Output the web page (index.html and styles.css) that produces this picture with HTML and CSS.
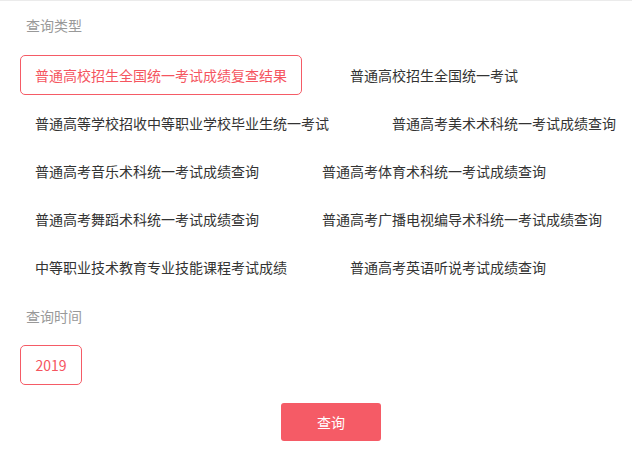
FILE: index.html
```html
<!DOCTYPE html>
<html lang="zh-CN">
<head>
<meta charset="utf-8">
<link rel="stylesheet" href="styles.css">
</head>
<body>
<div class="page">
  <div class="label">查询类型</div>
  <div class="options">
    <div class="row">
      <span class="opt active">普通高校招生全国统一考试成绩复查结果</span>
      <span class="opt">普通高校招生全国统一考试</span>
    </div>
    <div class="row">
      <span class="opt">普通高等学校招收中等职业学校毕业生统一考试</span>
      <span class="opt">普通高考美术术科统一考试成绩查询</span>
    </div>
    <div class="row">
      <span class="opt">普通高考音乐术科统一考试成绩查询</span>
      <span class="opt">普通高考体育术科统一考试成绩查询</span>
    </div>
    <div class="row">
      <span class="opt">普通高考舞蹈术科统一考试成绩查询</span>
      <span class="opt">普通高考广播电视编导术科统一考试成绩查询</span>
    </div>
    <div class="row">
      <span class="opt">中等职业技术教育专业技能课程考试成绩</span>
      <span class="opt">普通高考英语听说考试成绩查询</span>
    </div>
  </div>
  <div class="label label-time">查询时间</div>
  <div class="options">
    <div class="row">
      <span class="opt active year">2019</span>
    </div>
  </div>
  <div class="actions">
    <button class="submit">查询</button>
  </div>
</div>
</body>
</html>
```

FILE: styles.css
```css
html, body {
  margin: 0;
  padding: 0;
  background: #fff;
}
body {
  font-family: "Noto Sans CJK SC", "Noto Sans", sans-serif;
  font-size: 14px;
  color: #333;
}
.page {
  border-top: 1px solid #ebebeb;
  padding: 14px 0 0 20px;
}
.label {
  color: #999;
  line-height: 20px;
  padding-left: 6px;
  margin-bottom: 20px;
}
.label-time {
  margin-top: 19px;
  margin-bottom: 19px;
}
.options {
  display: flex;
  flex-direction: column;
  gap: 8px;
}
.row {
  display: flex;
  gap: 33px;
}
.opt {
  box-sizing: border-box;
  height: 40px;
  line-height: 38px;
  padding: 0 14px;
  border: 1px solid transparent;
  border-radius: 5px;
  white-space: nowrap;
}
.opt.active {
  border-color: #f55b66;
  color: #f5555f;
}
.opt.year {
  width: 62px;
  padding: 0;
  text-align: center;
}
.actions {
  display: flex;
  justify-content: center;
  padding: 18px 0 0 10px;
}
.submit {
  width: 100px;
  height: 38px;
  border: none;
  border-radius: 3px;
  background: #f55b66;
  color: #fff;
  font-family: inherit;
  font-size: 14px;
}
```
